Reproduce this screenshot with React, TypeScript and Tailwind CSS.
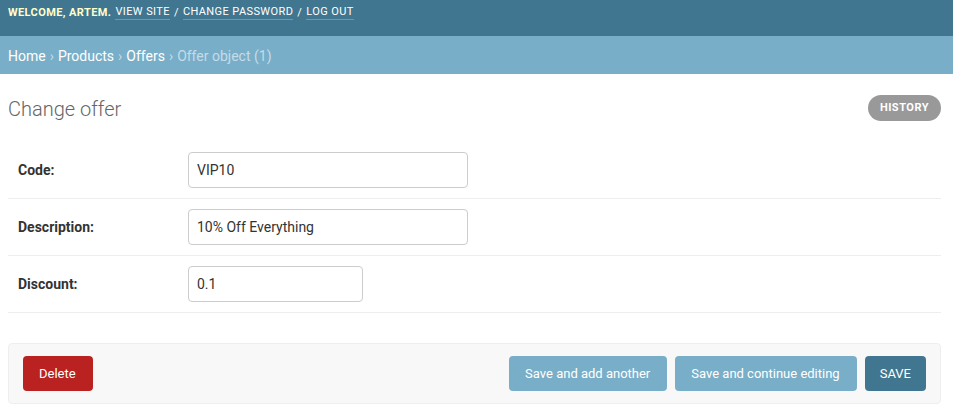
export default function App() {
  const fields = [
    { label: 'Code:', value: 'VIP10', width: 'w-[280px]' },
    { label: 'Description:', value: '10% Off Everything', width: 'w-[280px]' },
    { label: 'Discount:', value: '0.1', width: 'w-[175px]' },
  ]

  return (
    <div className="min-h-[411px] bg-white font-['Roboto',sans-serif] text-[14px] text-[#333]">
      {/* Header */}
      <div className="flex h-[36px] items-start bg-[#417690] px-2 pt-[5px] text-[11px] uppercase tracking-[0.4px] text-white">
        <span className="font-bold text-[#ffc]">Welcome, Artem.</span>
        <span className="ml-1 border-b border-white/25 leading-[14px]">View site</span>
        <span className="mx-1">/</span>
        <span className="border-b border-white/25 leading-[14px]">Change password</span>
        <span className="mx-1">/</span>
        <span className="border-b border-white/25 leading-[14px]">Log out</span>
      </div>

      {/* Breadcrumbs */}
      <div className="flex h-[38px] items-center bg-[#79aec8] px-2 pt-[3px] text-[14px] text-[#c4dce8]">
        <span className="text-white">Home</span>
        <span className="mx-1">›</span>
        <span className="text-white">Products</span>
        <span className="mx-1">›</span>
        <span className="text-white">Offers</span>
        <span className="mx-1">›</span>
        <span>Offer object (1)</span>
      </div>

      <div className="pl-2 pr-3">
        {/* Title row */}
        <div className="mt-5 flex h-[28px] items-center justify-between">
          <h1 className="pt-[2px] text-[20px] font-light text-[#666]">Change offer</h1>
          <span className="flex h-[26px] items-center rounded-full bg-[#999] px-[12px] text-[11px] font-bold uppercase tracking-[0.5px] text-white">
            History
          </span>
        </div>

        {/* Form rows */}
        <div className="mt-5">
          {fields.map((f) => (
            <div key={f.label} className="flex items-center border-b border-[#eee] p-[10px]">
              <label className="w-[170px] font-bold text-[#333]">{f.label}</label>
              <div
                className={`flex h-[36px] items-center rounded border border-[#ccc] px-2 text-[14px] text-[#333] ${f.width}`}
              >
                {f.value}
              </div>
            </div>
          ))}
        </div>

        {/* Submit row */}
        <div className="mt-[30px] flex items-center rounded border border-[#eee] bg-[#f8f8f8] px-[14px] py-[12px]">
          <button className="h-[35px] rounded bg-[#ba2121] pl-[16px] pr-[17px] text-[13px] text-white">Delete</button>
          <div className="ml-auto flex gap-2">
            <button className="h-[35px] rounded bg-[#79aec8] pl-[16px] pr-[17px] text-[13px] text-white">
              Save and add another
            </button>
            <button className="h-[35px] rounded bg-[#79aec8] pl-[16px] pr-[17px] text-[13px] text-white">
              Save and continue editing
            </button>
            <button className="h-[35px] rounded bg-[#417690] px-[15px] text-[13px] uppercase text-white">
              Save
            </button>
          </div>
        </div>
      </div>
    </div>
  )
}
